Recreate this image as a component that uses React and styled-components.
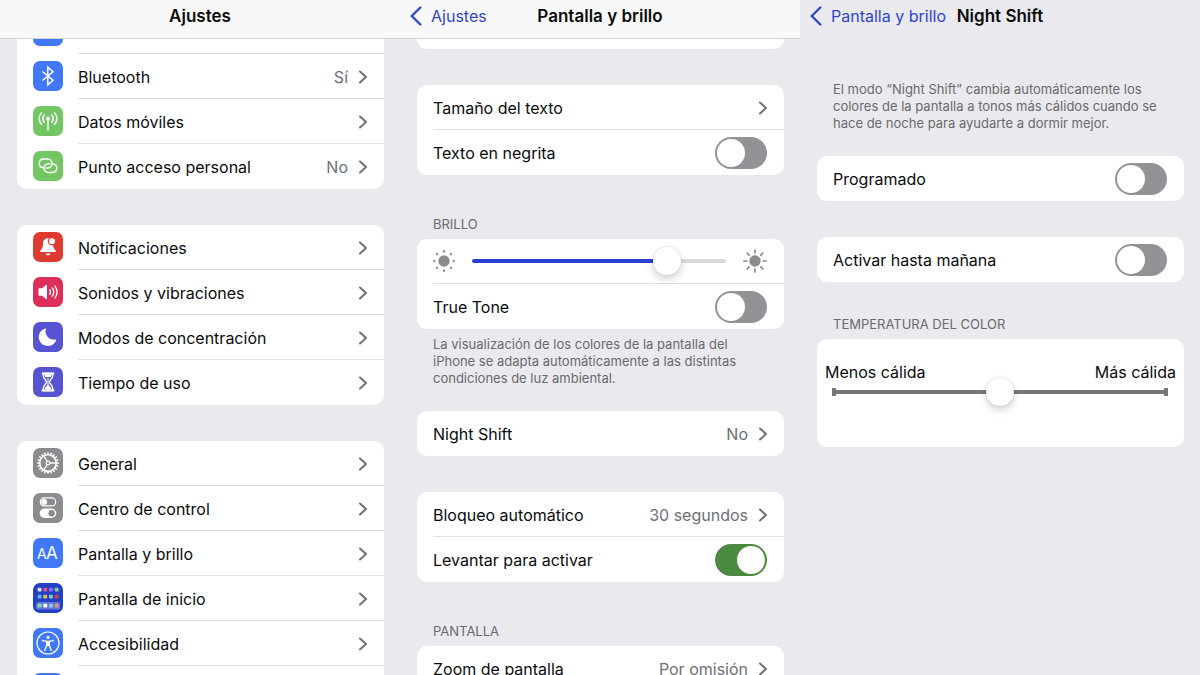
import React, { useState } from 'react'
import styled, { createGlobalStyle } from 'styled-components'

const GlobalStyle = createGlobalStyle`
    * {
        box-sizing: border-box;
    }
    body {
        margin: 0;
        background: #e9e9ee;
        font-family: Inter, "Liberation Sans", sans-serif;
        font-size: 16px;
        color: #0b0b0c;
    }
`

const Screens = styled.main`
    display: grid;
    grid-template-columns: repeat(3, 1fr);
    height: 100vh;
    overflow: hidden;
`
const Screen = styled.section`
    min-width: 0;
    overflow: hidden;
`
const Header = styled.header`
    display: grid;
    grid-template-columns: 1fr auto 1fr;
    align-items: center;
    height: 39px;
    padding: 0 10px 6px;
    border-bottom: 1px solid ${props => props.$plain ? 'transparent' : '#d3d3d7'};
    background: ${props => props.$plain ? 'transparent' : '#f8f8f9'};
`
const Title = styled.h1`
    grid-column: 2;
    margin: 0;
    font-size: 17px;
    line-height: 24px;
    font-weight: 600;
    white-space: nowrap;
`
const Back = styled.a`
    display: flex;
    align-items: center;
    gap: 9px;
    color: #2f46cf;
    line-height: 24px;
    text-decoration: none;
    white-space: nowrap;
`
const Content = styled.div`
    padding: ${props => props.$top || '0'} 16px 0 17px;
`
const Card = styled.div`
    overflow: hidden;
    border-radius: ${props => props.$cut ? '0 0 10px 10px' : '10px'};
    background: #fff;
    & + & {
        margin-top: 36px;
    }
`
const Stub = styled.div`
    height: 10px;
`
const Row = styled.div`
    display: flex;
    align-items: ${props => props.$cut ? 'flex-end' : 'center'};
    gap: 15px;
    height: ${props => props.$cut ? '15px' : '45px'};
    padding-left: 16px;
    color: inherit;
    text-decoration: none;
    > svg {
        flex: none;
        margin-bottom: ${props => props.$cut ? '8px' : '1px'};
    }
    &:last-child > div {
        border-bottom-color: transparent;
    }
`
const RowBody = styled.div`
    display: flex;
    flex: 1;
    align-items: center;
    justify-content: space-between;
    align-self: stretch;
    min-width: 0;
    padding: 2px 17px 0 0;
    border-bottom: 1px solid #dfdfe2;
    white-space: nowrap;
`
const Value = styled.span`
    display: flex;
    align-items: center;
    gap: 11px;
    color: #6f6f74;
`
const SectionLabel = styled.h2`
    margin: 0;
    padding: ${props => props.$compact ? '34px' : '41px'} 16px 7px;
    font-size: 13px;
    line-height: 16px;
    font-weight: 400;
    color: #6a6a6f;
    text-transform: uppercase;
`
const Note = styled.p`
    margin: 0;
    padding: 7px 16px 24px;
    font-size: 13px;
    line-height: 17px;
    color: #6a6a6f;
    white-space: nowrap;
`
const Switch = styled.input`
    appearance: none;
    width: 52px;
    height: 32px;
    margin: 0;
    padding: 2px;
    border-radius: 16px;
    background: #929297;
    cursor: pointer;
    &::before {
        content: '';
        display: block;
        width: 28px;
        height: 28px;
        border-radius: 50%;
        background: #fff;
    }
    &:checked {
        background: #4c8a41;
    }
    &:checked::before {
        margin-left: auto;
    }
`
const Slider = styled.input`
    appearance: none;
    flex: 1;
    min-width: 0;
    width: 100%;
    height: 20px;
    margin: 0;
    background: transparent;
    &::-webkit-slider-runnable-track {
        height: 4px;
        border-radius: 2px;
        background: ${props => props.$track};
    }
    &::-webkit-slider-thumb {
        appearance: none;
        width: 28px;
        height: 28px;
        margin-top: -12px;
        border-radius: 50%;
        background: #fff;
        box-shadow: 0 4px 9px rgba(0, 0, 0, 0.18), 0 0 2px rgba(0, 0, 0, 0.16);
    }
`
const BrightnessRow = styled(RowBody)`
    gap: 17px;
    padding-top: 0;
    svg {
        flex: none;
    }
`
const Temperature = styled.div`
    padding: 21px 0 47px;
`
const Ends = styled.div`
    display: flex;
    justify-content: space-between;
    padding: 0 8px;
    line-height: 24px;
`
const TemperatureTrack = styled.div`
    display: flex;
    align-items: center;
    height: 16px;
    margin: 0 16px 0 15px;
    background:
        linear-gradient(#77777a, #77777a) left center / 4px 8px no-repeat,
        linear-gradient(#77777a, #77777a) right center / 4px 8px no-repeat;
`

const Chevron = () => (
    <svg width="8" height="14" viewBox="0 0 8 14" fill="none" stroke="#717175" strokeWidth="2" strokeLinecap="round" strokeLinejoin="round">
        <path d="M1 1.5 7 7 1 12.5" />
    </svg>
)

const BackChevron = () => (
    <svg width="12" height="20" viewBox="0 0 12 20" fill="none" stroke="#2f46cf" strokeWidth="2.4" strokeLinecap="round" strokeLinejoin="round">
        <path d="M10.3 1.5 1.7 10l8.6 8.5" />
    </svg>
)

const Tile = ({ color, children }) => (
    <svg width="30" height="30" viewBox="0 0 30 30" fill="none" stroke="#fff" strokeWidth="1.5" strokeLinecap="round" strokeLinejoin="round" aria-hidden="true">
        <rect width="30" height="30" rx="7" fill={color} stroke="none" />
        {children}
    </svg>
)

const BLUE = '#4078f7'
const GREEN = '#73c663'
const INDIGO = '#5754d3'
const GRAY = '#8b8b90'

const teeth = [...Array(20).keys()].map(i => i * 18)

const appColors = [
    ['#e4dff5', '#d9568b', '#8f6cf0', '#86d19a'],
    ['#5fb4f3', '#e8b552', '#77cfc8', '#d4453f'],
    ['#8fe09a', '#ffffff', '#8cc5f2', '#d99a72'],
]

const icons = {
    wifi: <Tile color={BLUE} />,
    bluetooth: (
        <Tile color={BLUE}>
            <path d="M9.5 10.5 20 19.3 14.8 23.8V6.2L20 10.7 9.5 19.5" strokeLinejoin="miter" strokeLinecap="butt" />
        </Tile>
    ),
    mobile: (
        <Tile color={GREEN}>
            <circle cx="15" cy="12.5" r="2" fill="#fff" stroke="none" />
            <path d="M15 13v11M11.3 8.9a5 5 0 0 0 0 7.2M18.7 8.9a5 5 0 0 1 0 7.2M8.4 6.9a8 8 0 0 0 0 11.2M21.6 6.9a8 8 0 0 1 0 11.2" />
        </Tile>
    ),
    hotspot: (
        <Tile color={GREEN}>
            <path d="M9.6 16.6a4.3 4.3 0 0 1 .7-8.5h4.3a4.4 4.4 0 0 1 0 8.8h-1.400" />
            <path d="M9.6 16.6a4.3 4.3 0 0 1 .7-8.5h4.3a4.4 4.4 0 0 1 0 8.8h-1.400" transform="rotate(180 15 14.800)" />
        </Tile>
    ),
    bell: (
        <Tile color="#df3a32">
            <path d="M15 6.3c-3.3 0-5 2.3-5 5.2 0 4-1 5.2-2.6 7-.5.6-.2 1.6.7 1.6h13.8c.9 0 1.2-1 .7-1.6-1.6-1.8-2.6-3-2.6-7 0-2.9-1.7-5.2-5-5.2z" fill="#fff" stroke="none" />
            <path d="M12.4 21.4h5.2a2.7 2.7 0 0 1-5.2 0z" fill="#fff" stroke="none" />
            <circle cx="19" cy="9.2" r="3.6" fill="#fff" stroke="#df3a32" strokeWidth="1.2" />
        </Tile>
    ),
    sound: (
        <Tile color="#df2d59">
            <path d="M5.5 12.3c0-.6.4-1 1-1h2.6l3.5-3.1c.6-.5 1.4-.2 1.4.6v12.4c0 .8-.8 1.1-1.4.6l-3.5-3.1H6.5c-.6 0-1-.4-1-1z" fill="#fff" stroke="none" />
            <path d="M16.7 12.7a4 4 0 0 1 0 4.6M19.3 10.9a7 7 0 0 1 0 8.2M22 9.1a10.3 10.3 0 0 1 0 11.8" strokeWidth="1.4" />
        </Tile>
    ),
    moon: (
        <Tile color={INDIGO}>
            <path d="M12.9 6.9a.5.5 0 0 0-.7-.5 9 9 0 1 0 11 11.8.5.5 0 0 0-.6-.7A8.4 8.4 0 0 1 12.9 6.9z" fill="#fff" stroke="none" />
        </Tile>
    ),
    hourglass: (
        <Tile color={INDIGO}>
            <path d="M10.2 6.5h9.6v2c0 3-3.3 4.6-3.3 6.5s3.3 3.5 3.3 6.5v2h-9.6v-2c0-3 3.3-4.6 3.3-6.5s-3.3-3.5-3.3-6.5z" strokeWidth="1.3" />
            <path d="M9.5 6.5h11M9.5 23.5h11" strokeWidth="2" />
            <path d="M11.5 7h7v1.5l-1 1.5h-5l-1-1.5zM15 17.5c1 1.8 3.4 2.4 3.6 5h-7.2c.2-2.6 2.6-3.2 3.6-5z" fill="#fff" stroke="none" />
            <path d="M15 11v8" strokeWidth="1" />
        </Tile>
    ),
    gear: (
        <Tile color={GRAY}>
            <circle cx="15" cy="15" r="8.3" strokeWidth="1.7" />
            {teeth.map(deg => <path key={deg} d="M15 6V4.2" transform={`rotate(${deg} 15 15)`} strokeWidth="1.5" strokeLinecap="butt" />)}
            <circle cx="15" cy="15" r="1.8" strokeWidth="1.2" />
            <path d="M17 15h6M14 13.3 11 8.1M14 16.7 11 21.9" strokeWidth="1.3" />
        </Tile>
    ),
    controls: (
        <Tile color={GRAY}>
            <rect x="7.3" y="4.9" width="15.4" height="8" rx="4" strokeWidth="1.2" />
            <circle cx="11.2" cy="8.9" r="2.9" fill="#fff" stroke="none" />
            <rect x="6.7" y="15.6" width="16.6" height="9.4" rx="4.7" fill="#fff" stroke="none" />
            <circle cx="18.6" cy="20.3" r="3.2" fill={GRAY} stroke="none" />
        </Tile>
    ),
    display: (
        <Tile color={BLUE}>
            <text x="4" y="21" fill="#fff" stroke="none" fontSize="14">A</text>
            <text x="13" y="21" fill="#fff" stroke="none" fontSize="17">A</text>
        </Tile>
    ),
    home: (
        <Tile color="#2540c4">
            <rect x="3" y="19" width="24" height="7.5" rx="2" fill="#6176d8" stroke="none" />
            {appColors.map((line, y) => line.map((color, x) => (
                <rect key={`${x}-${y}`} x={4.6 + x * 5.7} y={[4.7, 11.7, 20.7][y]} width="3.9" height="3.9" rx="1" fill={color} stroke="none" />
            )))}
        </Tile>
    ),
    access: (
        <Tile color={BLUE}>
            <circle cx="15" cy="15" r="11" strokeWidth="1.2" />
            <circle cx="15" cy="9.3" r="1.6" fill="#fff" stroke="none" />
            <path d="M9.5 12.5 13.5 13.3h3l4-.8M13.6 13.5v4L11.8 22.5M16.4 13.5v4l1.8 5" strokeWidth="1.3" />
            <path d="M13.3 13h3.4v5h-3.4z" fill="#fff" stroke="none" />
        </Tile>
    ),
}

const rays = [0, 45, 90, 135, 180, 225, 270, 315]

const Sun = ({ bright }) => (
    <svg width={bright ? 24 : 22} height="24" viewBox={bright ? '0 0 24 24' : '1 0 22 24'} fill="#8b8b90" stroke="#8b8b90" aria-hidden="true">
        <circle cx="12" cy="12" r="5.7" stroke="none" />
        {rays.map(deg => bright
            ? <path key={deg} d="M12 3.8V1" transform={`rotate(${deg} 12 12)`} strokeWidth="1.7" strokeLinecap="round" />
            : <circle key={deg} cx="12" cy="2.3" r="1.2" transform={`rotate(${deg} 12 12)`} stroke="none" />)}
    </svg>
)

function LinkRow({ icon, label, value }) {
    return (
        <Row as="a" href="#">
            {icon && icons[icon]}
            <RowBody>
                <span>{label}</span>
                <Value>{value}<Chevron /></Value>
            </RowBody>
        </Row>
    )
}

function SwitchRow({ label, on = false }) {
    const [checked, setChecked] = useState(on)

    return (
        <Row as="label">
            <RowBody>
                <span>{label}</span>
                <Switch type="checkbox" role="switch" checked={checked} onChange={() => setChecked(!checked)} />
            </RowBody>
        </Row>
    )
}

function App() {
    const [brightness, setBrightness] = useState(80)
    const [warmth, setWarmth] = useState(50)

    return (
        <>
            <GlobalStyle />
            <Screens>
                <Screen>
                    <Header><Title>Ajustes</Title></Header>
                    <Content>
                        <Card $cut>
                            <Row $cut>{icons.wifi}<RowBody /></Row>
                            <LinkRow icon="bluetooth" label="Bluetooth" value="Sí" />
                            <LinkRow icon="mobile" label="Datos móviles" />
                            <LinkRow icon="hotspot" label="Punto acceso personal" value="No" />
                        </Card>
                        <Card>
                            <LinkRow icon="bell" label="Notificaciones" />
                            <LinkRow icon="sound" label="Sonidos y vibraciones" />
                            <LinkRow icon="moon" label="Modos de concentración" />
                            <LinkRow icon="hourglass" label="Tiempo de uso" />
                        </Card>
                        <Card>
                            <LinkRow icon="gear" label="General" />
                            <LinkRow icon="controls" label="Centro de control" />
                            <LinkRow icon="display" label="Pantalla y brillo" />
                            <LinkRow icon="home" label="Pantalla de inicio" />
                            <LinkRow icon="access" label="Accesibilidad" />
                            <Row>{icons.wifi}</Row>
                        </Card>
                    </Content>
                </Screen>

                <Screen>
                    <Header>
                        <Back href="#"><BackChevron />Ajustes</Back>
                        <Title>Pantalla y brillo</Title>
                    </Header>
                    <Content>
                        <Card $cut><Stub /></Card>
                        <Card>
                            <LinkRow label="Tamaño del texto" />
                            <SwitchRow label="Texto en negrita" />
                        </Card>
                        <SectionLabel>Brillo</SectionLabel>
                        <Card>
                            <Row>
                                <BrightnessRow>
                                    <Sun />
                                    <Slider
                                        type="range"
                                        aria-label="Brillo"
                                        value={brightness}
                                        onChange={(e) => setBrightness(Number(e.target.value))}
                                        $track={`linear-gradient(to right, #2b40d2 ${brightness}%, #d9d9dc ${brightness}%)`}
                                    />
                                    <Sun bright />
                                </BrightnessRow>
                            </Row>
                            <SwitchRow label="True Tone" />
                        </Card>
                        <Note>
                            La visualización de los colores de la pantalla del<br />
                            iPhone se adapta automáticamente a las distintas<br />
                            condiciones de luz ambiental.
                        </Note>
                        <Card>
                            <LinkRow label="Night Shift" value="No" />
                        </Card>
                        <Card>
                            <LinkRow label="Bloqueo automático" value="30 segundos" />
                            <SwitchRow label="Levantar para activar" on />
                        </Card>
                        <SectionLabel>Pantalla</SectionLabel>
                        <Card>
                            <LinkRow label="Zoom de pantalla" value="Por omisión" />
                        </Card>
                    </Content>
                </Screen>

                <Screen>
                    <Header $plain>
                        <Back href="#"><BackChevron />Pantalla y brillo</Back>
                        <Title>Night Shift</Title>
                    </Header>
                    <Content $top="35px">
                        <Note>
                            El modo “Night Shift” cambia automáticamente los<br />
                            colores de la pantalla a tonos más cálidos cuando se<br />
                            hace de noche para ayudarte a dormir mejor.
                        </Note>
                        <Card>
                            <SwitchRow label="Programado" />
                        </Card>
                        <Card>
                            <SwitchRow label="Activar hasta mañana" />
                        </Card>
                        <SectionLabel $compact>Temperatura del color</SectionLabel>
                        <Card>
                            <Temperature>
                                <Ends>
                                    <span>Menos cálida</span>
                                    <span>Más cálida</span>
                                </Ends>
                                <TemperatureTrack>
                                    <Slider
                                        type="range"
                                        aria-label="Temperatura del color"
                                        value={warmth}
                                        onChange={(e) => setWarmth(Number(e.target.value))}
                                        $track="#77777a"
                                    />
                                </TemperatureTrack>
                            </Temperature>
                        </Card>
                    </Content>
                </Screen>
            </Screens>
        </>
    )
}

export default App
